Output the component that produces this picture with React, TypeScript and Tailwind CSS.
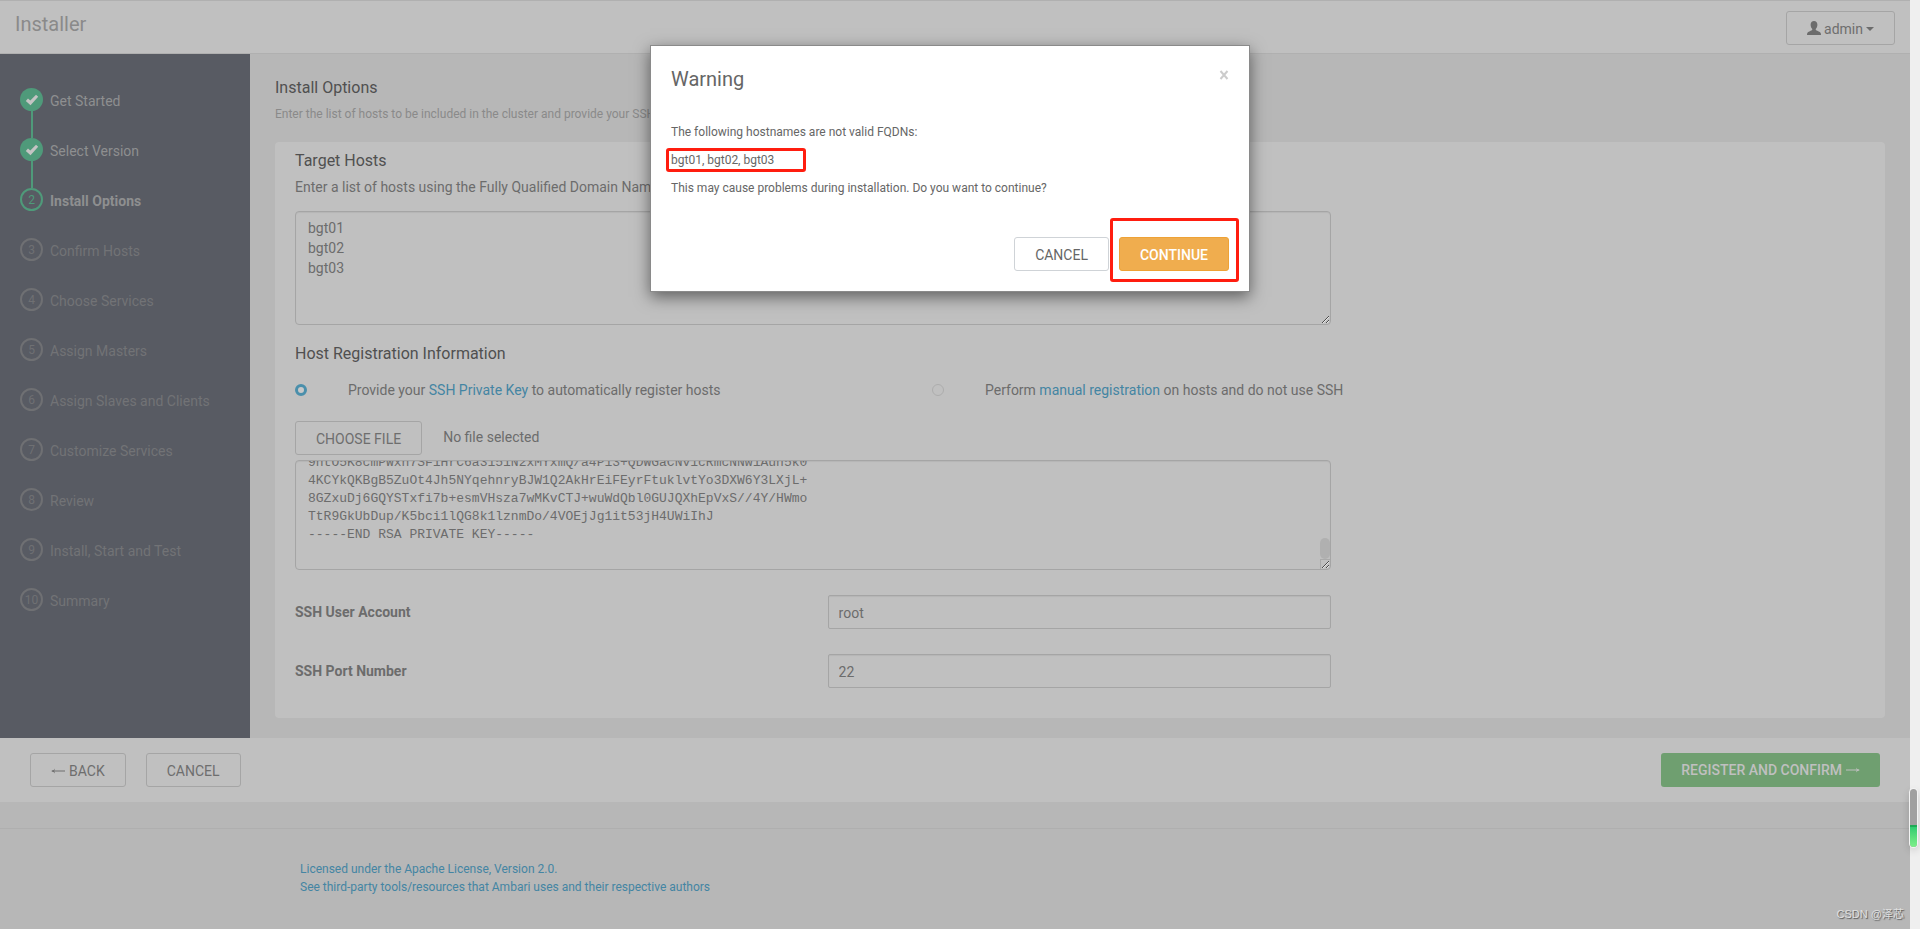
import { useEffect, useRef } from "react";

const steps = [
  "Get Started",
  "Select Version",
  "Install Options",
  "Confirm Hosts",
  "Choose Services",
  "Assign Masters",
  "Assign Slaves and Clients",
  "Customize Services",
  "Review",
  "Install, Start and Test",
  "Summary",
];
const CURRENT = 2;

const privateKey = `9ntO5K8cmPWxh7SF1HrC6a3151N2xMYxmQ/a4P13+QDWGaCNv1cRmcNNw1Aun5k0
4KCYkQKBgB5ZuOt4Jh5NYqehnryBJW1Q2AkHrEiFEyrFtuklvtYo3DXW6Y3LXjL+
8GZxuDj6GQYSTxfi7b+esmVHsza7wMKvCTJ+wuWdQbl0GUJQXhEpVxS//4Y/HWmo
TtR9GkUbDup/K5bci1lQG8k1lznmDo/4VOEjJg1it53jH4UWiIhJ
-----END RSA PRIVATE KEY-----
`;

const outlineButton =
  "h-[34px] rounded-[3px] border border-[#a5a5a5] px-5 pt-0.5 text-sm leading-5 text-[#6e6e6e]";

function Arrow({ className }: { className?: string }) {
  return (
    <svg viewBox="0 0 14 8" className={`h-2 w-[14px] ${className ?? ""}`} aria-hidden="true">
      <path d="M0 4h13" stroke="currentColor" strokeWidth="1" />
      <path d="M10 1.500Q11 3.500 14 4Q11 4.500 10 6.500L10.800 4Z" fill="currentColor" />
    </svg>
  );
}

function StepMarker({ index }: { index: number }) {
  if (index < CURRENT) {
    return (
      <span className="flex size-[23px] items-center justify-center rounded-full bg-[#4f9a7a]">
        <svg viewBox="0 0 14 14" className="size-[14px]" aria-hidden="true">
          <path d="M.8 8 3 5.600 5.300 7.500 11 1.800 13.200 3.800 5.500 12.200Z" fill="#c4c4c4" />
        </svg>
      </span>
    );
  }
  return (
    <span
      className={
        index === CURRENT
          ? "flex size-[23px] items-center justify-center rounded-full border-2 border-[#4f9a7a] text-xs text-[#4f9a7a]"
          : "flex size-[23px] items-center justify-center rounded-full border-2 border-[#6f7073] text-xs text-[#6f7073]"
      }
    >
      {index}
    </span>
  );
}

function Sidebar() {
  return (
    <nav aria-label="Install wizard" className="w-[250px] shrink-0 bg-[#585b63] pt-[34px] pl-5">
      <ol>
        {steps.map((label, i) => (
          <li key={label} className="flex h-[50px] gap-[7px]">
            <div className="flex flex-col items-center">
              <StepMarker index={i} />
              {i < CURRENT && <span className="w-0.5 grow bg-[#4f9a7a]" />}
            </div>
            <a
              href="#"
              className={
                i === CURRENT
                  ? "pt-[3px] text-sm leading-5 font-bold text-[#8e8f90]"
                  : i < CURRENT
                    ? "pt-[3px] text-sm leading-5 text-[#8e8f90]"
                    : "pt-[3px] text-sm leading-5 text-[#727376]"
              }
            >
              {label}
            </a>
          </li>
        ))}
      </ol>
    </nav>
  );
}

function InstallOptions() {
  const keyRef = useRef<HTMLTextAreaElement>(null);
  useEffect(() => {
    if (keyRef.current) keyRef.current.scrollTop = keyRef.current.scrollHeight;
  }, []);

  return (
    <main className="min-w-0 grow px-[25px] pt-6 pb-5">
      <h1 className="text-base leading-5 text-[#505050]">Install Options</h1>
      <p className="mt-[7px] text-xs leading-[18px] text-[#8a8a8a]">
        Enter the list of hosts to be included in the cluster and provide your SSH key.
      </p>
      <section className="mt-[19px] rounded bg-[#c0c0c0] px-5 pt-[9px] pb-[30px]">
        <h2 className="text-base leading-5 text-[#505050]">Target Hosts</h2>
        <label htmlFor="hosts" className="mt-[6px] block text-sm leading-5">
          Enter a list of hosts using the Fully Qualified Domain Name
        </label>
        <textarea
          id="hosts"
          defaultValue={"bgt01\nbgt02\nbgt03"}
          className="mt-[14px] block h-[114px] w-[66%] rounded border border-[#a5a5a5] px-3 py-[6px] text-sm leading-5 shadow-[inset_0_1px_1px_rgba(0,0,0,0.06)]"
        />

        <h2 className="mt-[19px] text-base leading-5 text-[#505050]">
          Host Registration Information
        </h2>
        <div className="mt-4 grid grid-cols-[637fr_933fr] text-sm leading-5">
          <div className="flex items-center gap-[41px]">
            <input
              id="use-ssh"
              type="radio"
              name="registration"
              defaultChecked
              className="size-3 appearance-none rounded-full border-3 border-[#4a8fab] bg-[#c8c8c8]"
            />
            <label htmlFor="use-ssh">
              Provide your <a href="#" className="text-[#4485a3]">SSH Private Key</a> to automatically
              register hosts
            </label>
          </div>
          <div className="flex items-center gap-[41px]">
            <input
              id="manual"
              type="radio"
              name="registration"
              className="size-3 appearance-none rounded-full border border-[#adadad]"
            />
            <label htmlFor="manual">
              Perform <a href="#" className="text-[#4485a3]">manual registration</a> on hosts and do not
              use SSH
            </label>
          </div>
        </div>

        <div className="mt-[21px] flex gap-[21px]">
          <button type="button" className={outlineButton}>
            CHOOSE FILE
          </button>
          <span className="pt-[6px] text-sm leading-5">No file selected</span>
        </div>
        <div className="relative mt-[5px] w-[66%]">
          <textarea
            ref={keyRef}
            aria-label="SSH private key"
            defaultValue={privateKey}
            className="block h-[110px] w-full overflow-hidden rounded border border-[#a5a5a5] px-3 pt-[6px] pb-[7px] font-['Liberation_Mono',monospace] text-[13px] leading-[18px] whitespace-pre shadow-[inset_0_1px_1px_rgba(0,0,0,0.06)]"
          />
          <span className="absolute right-px bottom-[11px] h-[21px] w-[10px] rounded-full bg-[#b0b0b0]" />
          <span className="absolute right-px bottom-px size-[10px] border-t border-l border-[#aaaaaa]" />
        </div>

        <div className="mt-[25px] grid w-[66%] grid-cols-[533fr_504fr] gap-y-[25px] text-sm leading-5">
          <label htmlFor="ssh-user" className="pt-[7px] font-bold">
            SSH User Account
          </label>
          <input
            id="ssh-user"
            defaultValue="root"
            className="h-[34px] min-w-0 rounded-[2px] border border-[#a5a5a5] px-[10px] pt-0.5 shadow-[inset_0_1px_1px_rgba(0,0,0,0.06)]"
          />
          <label htmlFor="ssh-port" className="pt-[7px] font-bold">
            SSH Port Number
          </label>
          <input
            id="ssh-port"
            defaultValue="22"
            className="h-[34px] min-w-0 rounded-[2px] border border-[#a5a5a5] px-[10px] pt-0.5 shadow-[inset_0_1px_1px_rgba(0,0,0,0.06)]"
          />
        </div>
      </section>
    </main>
  );
}

function WarningDialog() {
  return (
    <div className="absolute inset-x-0 top-[45px] flex justify-center pr-[10px]">
      <div
        role="dialog"
        aria-labelledby="warning-title"
        className="relative w-[600px] border border-[#8a8a8a] bg-white px-5 pt-[19px] pb-5 text-[#666666] shadow-[0_5px_15px_rgba(0,0,0,0.5)]"
      >
        <div className="flex items-start justify-between">
          <h2 id="warning-title" className="text-xl leading-7">
            Warning
          </h2>
          <button type="button" aria-label="Close" className="flex h-5 items-center">
            <svg viewBox="0 0 10 10" className="size-[10px]" aria-hidden="true">
              <path d="M1.500 1 8.500 9M8.500 1 1.500 9" stroke="#cccccc" strokeWidth="2" />
            </svg>
          </button>
        </div>
        <div className="mt-[30px] flex flex-col gap-[10px] text-xs leading-[18px]">
          <p>The following hostnames are not valid FQDNs:</p>
          <p>bgt01, bgt02, bgt03</p>
          <p>This may cause problems during installation. Do you want to continue?</p>
        </div>
        <div className="mt-10 flex justify-end gap-[10px] text-sm leading-5">
          <button type="button" className="h-[34px] rounded-[3px] border border-[#cfd3d7] px-5 pt-0.5">
            CANCEL
          </button>
          <button
            type="button"
            className="h-[34px] rounded-[3px] border border-[#eea236] bg-[#f0ad4e] px-5 pt-0.5 font-medium text-white"
          >
            CONTINUE
          </button>
        </div>
        <span className="absolute top-[102px] left-[15px] h-6 w-[140px] rounded-[3px] border-3 border-[#ff1d0f]" />
        <span className="absolute right-[10px] bottom-[9px] h-16 w-[129px] rounded-[3px] border-3 border-[#ff1d0f]" />
      </div>
    </div>
  );
}

export default function App() {
  return (
    <div className="flex min-h-screen bg-[#efefef] font-[Roboto,sans-serif] text-[#6c6c6c]">
      <div className="relative flex min-w-0 grow flex-col bg-[#b7b7b7]">
        <header className="flex h-[54px] items-start justify-between border-y border-[#b0b0b0] bg-[#c0c0c0] pr-[15px] pl-[15px]">
          <span className="pt-[9px] text-xl leading-7 text-[#8a8a8a]">Installer</span>
          <button type="button" className={`${outlineButton} mt-[10px] flex items-center gap-[3px]`}>
            <svg viewBox="0 0 14 14" className="mb-0.5 size-[14px]" aria-hidden="true">
              <path
                d="M7 0C4.900 0 3.600 1.500 3.600 3.800c0 1.500.6 3 1.500 4 .3.400.3 1.100-.2 1.400C3.500 9.900 1 10.700.5 11.700c-.4.700-.5 1.500-.5 2.300h14c0-.8-.1-1.600-.5-2.300-.5-1-3-1.800-4.400-2.500-.5-.3-.5-1-.2-1.400.9-1 1.500-2.500 1.500-4C10.400 1.500 9.100 0 7 0Z"
                fill="#6c6c6c"
              />
            </svg>
            admin
            <svg viewBox="0 0 8 4" className="h-1 w-2" aria-hidden="true">
              <path d="M0 0h8L4 4Z" fill="#6c6c6c" />
            </svg>
          </button>
        </header>

        <div className="flex">
          <Sidebar />
          <InstallOptions />
        </div>

        <div className="flex h-16 items-center justify-between bg-[#c0c0c0] pr-[30px] pl-[30px]">
          <div className="flex gap-5">
            <button type="button" className={`${outlineButton} flex items-center gap-1`}>
              <Arrow className="-scale-x-100" />
              BACK
            </button>
            <button type="button" className={outlineButton}>
              CANCEL
            </button>
          </div>
          <button
            type="button"
            className="flex h-[34px] items-center gap-1 rounded-[3px] bg-[#6f9f70] px-5 text-sm leading-5 font-medium text-[#c0c0c0]"
          >
            REGISTER AND CONFIRM
            <Arrow />
          </button>
        </div>

        <footer className="mt-[26px] flex flex-col items-start border-t border-[#afafaf] pt-[31px] pl-[300px] text-xs leading-[18px] text-[#4485a3]">
          <a href="#">Licensed under the Apache License, Version 2.0.</a>
          <a href="#">See third-party tools/resources that Ambari uses and their respective authors</a>
        </footer>

        <WarningDialog />
      </div>

      <div className="relative w-[10px] shrink-0">
        <span className="absolute top-[789px] right-[3px] flex h-[58px] w-[7px] flex-col overflow-hidden rounded-full bg-[#a0a0a0] shadow-[0_0_0_1px_#f4f4f4,0_3px_8px_rgba(0,0,0,0.2)]">
          <span className="mt-auto h-[22px] border-t-2 border-[#1faa55] bg-linear-to-b from-[#2ecc71] to-[#7df08a]" />
        </span>
        <span className="absolute right-4 bottom-[5px] font-['Liberation_Sans','Noto_Sans_CJK_SC',sans-serif] text-[11px] leading-5 whitespace-nowrap text-[#e0e0e0] [text-shadow:1px_1px_1px_#555]">
          CSDN @泽芯
        </span>
      </div>
    </div>
  );
}
